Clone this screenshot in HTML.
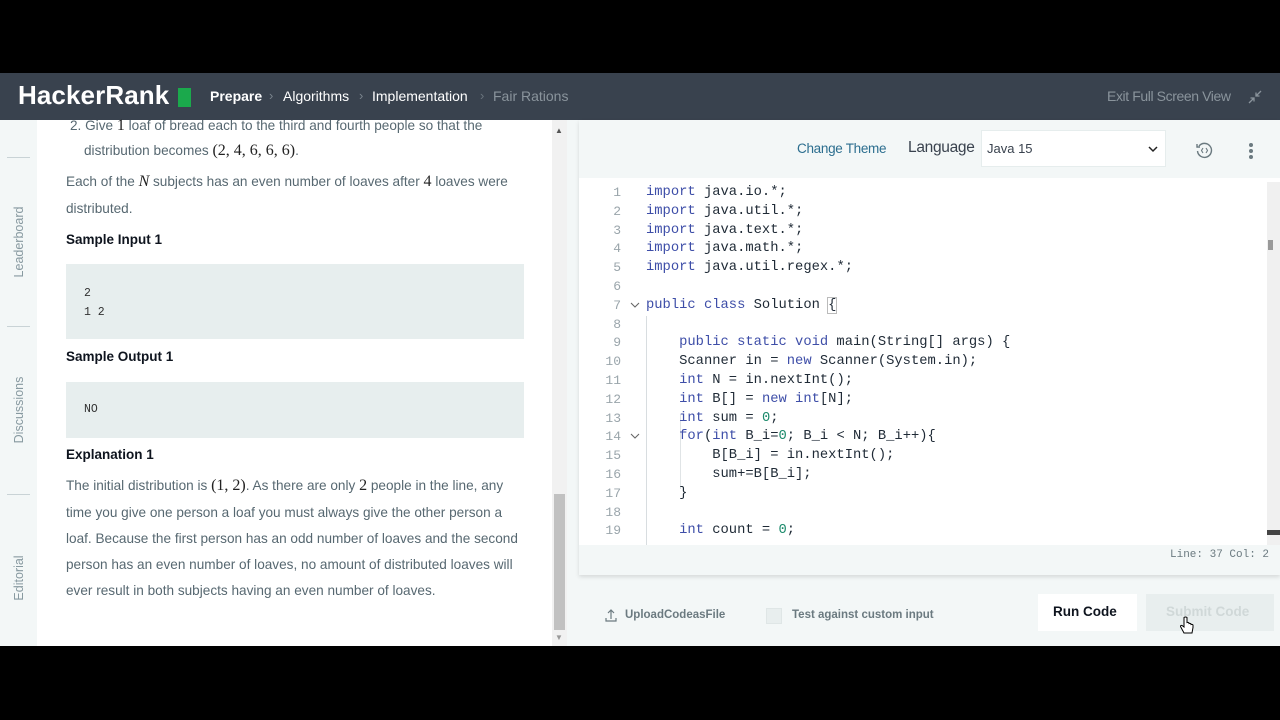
<!DOCTYPE html>
<html><head><meta charset="utf-8"><style>
*{margin:0;padding:0;box-sizing:border-box}
body{width:1280px;height:720px;background:#000;position:relative;overflow:hidden;font-family:"Liberation Sans",sans-serif}
.a{position:absolute;white-space:nowrap}
#hdr{position:absolute;left:0;top:73px;width:1280px;height:47px;background:#39424e}
#main{position:absolute;left:0;top:120px;width:1280px;height:526px;background:#f3f7f7}
.t{font-size:13.6px;color:#576871}
.m{font-family:"Liberation Serif",serif;font-size:16px;color:#222}
.h{font-size:13.5px;font-weight:bold;color:#0e141e}
.box{position:absolute;left:66px;width:458px;background:#e7eeee}
.code{font-family:"Liberation Mono",monospace;font-size:13.8px;color:#1f2a36}
.ln{position:absolute;left:600px;width:21px;text-align:right;font-family:"Liberation Mono",monospace;font-size:12.5px;color:#9aa5ab}
.k{color:#3e4ea8}.n{color:#1b8a6b}
.side{position:absolute;left:19px;transform:translate(-50%,-50%) rotate(-90deg);font-size:12.5px;color:#8799a0}
</style></head><body>
<div id="hdr">
 <div class="a" style="left:18px;top:7px;font-size:26px;font-weight:bold;color:#fff;letter-spacing:0.1px">HackerRank</div>
 <div class="a" style="left:178px;top:15px;width:13px;height:19px;background:#1ba94c"></div>
 <div class="a" style="left:210px;top:15px;font-size:14px;color:#fff;font-weight:bold">Prepare</div>
 <div class="a" style="left:269px;top:15px;font-size:13px;color:#7a848d">›</div>
 <div class="a" style="left:283px;top:15px;font-size:14px;color:#fff">Algorithms</div>
 <div class="a" style="left:359px;top:15px;font-size:13px;color:#7a848d">›</div>
 <div class="a" style="left:372px;top:15px;font-size:14px;color:#fff">Implementation</div>
 <div class="a" style="left:480px;top:15px;font-size:13px;color:#6a747d">›</div>
 <div class="a" style="left:493px;top:15px;font-size:14px;color:#8a949c">Fair Rations</div>
 <div class="a" style="left:1107px;top:15px;font-size:14px;color:#8a949c;letter-spacing:-0.4px">Exit Full Screen View</div>
 <svg class="a" style="left:1248px;top:17px" width="14" height="14" viewBox="0 0 14 14" stroke="#8a949c" stroke-width="1.3" fill="none"><path d="M1 13L6 8M2.5 8H6V11.5M13 1L8 6M8 2.5V6H11.5"/></svg>
</div>
<div id="main">
 <div class="a" style="left:7px;top:37px;width:23px;height:1px;background:#c9d3d6"></div>
 <div class="a" style="left:7px;top:206px;width:23px;height:1px;background:#c9d3d6"></div>
 <div class="a" style="left:7px;top:374px;width:23px;height:1px;background:#c9d3d6"></div>
 <div class="side" style="top:122px">Leaderboard</div>
 <div class="side" style="top:290px">Discussions</div>
 <div class="side" style="top:458px">Editorial</div>
 <div class="a" style="left:37px;top:0;width:515px;height:526px;background:#fff"></div>
 <div class="a" style="left:552px;top:0;width:15px;height:526px;background:#f1f1f1"></div>
 <div class="a" style="left:555px;top:6px;font-size:8px;color:#555">▲</div>
 <div class="a" style="left:555px;top:513px;font-size:8px;color:#999">▼</div>
 <div class="a" style="left:554px;top:374px;width:11px;height:136px;background:#c1c1c1"></div>
 <div class="a t" style="left:70px;top:-3px">2. Give <span class="m">1</span> loaf of bread each to the third and fourth people so that the</div>
 <div class="a t" style="left:84px;top:22px">distribution becomes <span class="m">(2, 4, 6, 6, 6)</span>.</div>
 <div class="a t" style="left:66px;top:53px">Each of the <span class="m"><i>N</i></span> subjects has an even number of loaves after <span class="m">4</span> loaves were</div>
 <div class="a t" style="left:66px;top:81px">distributed.</div>
 <div class="a h" style="left:66px;top:112px">Sample Input 1</div>
 <div class="box" style="top:144px;height:75px"></div>
 <div class="a code" style="left:84px;top:164px;font-size:11.5px;line-height:19px;color:#333">2<br>1 2</div>
 <div class="a h" style="left:66px;top:229px">Sample Output 1</div>
 <div class="box" style="top:262px;height:56px"></div>
 <div class="a code" style="left:84px;top:283px;font-size:11.5px;color:#333">NO</div>
 <div class="a h" style="left:66px;top:327px">Explanation 1</div>
 <div class="a t" style="left:66px;top:357px">The initial distribution is <span class="m">(1, 2)</span>. As there are only <span class="m">2</span> people in the line, any</div>
 <div class="a t" style="left:66px;top:385px">time you give one person a loaf you must always give the other person a</div>
 <div class="a t" style="left:66px;top:411px">loaf. Because the first person has an odd number of loaves and the second</div>
 <div class="a t" style="left:66px;top:437px">person has an even number of loaves, no amount of distributed loaves will</div>
 <div class="a t" style="left:66px;top:463px">ever result in both subjects having an even number of loaves.</div>

 <div class="a" style="left:579px;top:0;width:701px;height:455px;background:#f3f7f7;box-shadow:0 2px 4px rgba(0,0,0,.12)"></div>
 <div class="a" style="left:797px;top:21px;font-size:13.5px;color:#2c6e8f;letter-spacing:-0.3px">Change Theme</div>
 <div class="a" style="left:908px;top:19px;font-size:15.5px;color:#39424e;letter-spacing:-0.3px">Language</div>
 <div class="a" style="left:981px;top:10px;width:185px;height:37px;background:#fff;border:1px solid #e6eded"></div>
 <div class="a" style="left:987px;top:21px;font-size:13px;color:#39424e">Java 15</div>
 <svg class="a" style="left:1148px;top:26px" width="10" height="7" viewBox="0 0 10 7"><path d="M1 1L5 5L9 1" stroke="#222" stroke-width="1.5" fill="none"/></svg>
 <svg class="a" style="left:1195px;top:21px" width="19" height="19" viewBox="0 0 19 19" fill="none" stroke="#6b7a80" stroke-width="1.4"><path d="M4 5A7 7 0 1 1 2.5 10"/><path d="M2 3V6H5"/><path d="M8 7L6.5 9.5L8 12M11 7L12.5 9.5L11 12" stroke-width="1.1"/></svg>
 <div class="a" style="left:1249px;top:23px;width:4px;height:4px;border-radius:2px;background:#6b7a80;box-shadow:0 6px 0 #6b7a80,0 12px 0 #6b7a80"></div>
 <div class="a" style="left:579px;top:58px;width:701px;height:367px;background:#fff"></div>
 <div class="a" style="left:1267px;top:62px;width:13px;height:363px;background:#f0f0f0"></div>
 <div class="a" style="left:1268px;top:120px;width:5px;height:10px;background:#999"></div>
 <div class="a" style="left:1267px;top:410px;width:13px;height:5px;background:#444"></div>
 <div class="a" style="left:646px;top:196px;width:1px;height:229px;background:#d8dde0"></div>
 <div class="a" style="left:680px;top:294px;width:1px;height:75px;background:#e0e4e6"></div>
 <div class="a code" style="left:646px;top:64px;line-height:18.8px;white-space:pre"><span class="k">import</span> java.io.*;
<span class="k">import</span> java.util.*;
<span class="k">import</span> java.text.*;
<span class="k">import</span> java.math.*;
<span class="k">import</span> java.util.regex.*;

<span class="k">public class</span> Solution <span style="outline:1px solid #bbb">{</span>

    <span class="k">public static void</span> main(String[] args) {
    Scanner in = <span class="k">new</span> Scanner(System.in);
    <span class="k">int</span> N = in.nextInt();
    <span class="k">int</span> B[] = <span class="k">new int</span>[N];
    <span class="k">int</span> sum = <span class="n">0</span>;
    <span class="k">for</span>(<span class="k">int</span> B_i=<span class="n">0</span>; B_i &lt; N; B_i++){
        B[B_i] = in.nextInt();
        sum+=B[B_i];
    }

    <span class="k">int</span> count = <span class="n">0</span>;</div>
 <div class="ln" style="top:64px;line-height:18.8px;font-size:13px">1<br>2<br>3<br>4<br>5<br>6<br>7<br>8<br>9<br>10<br>11<br>12<br>13<br>14<br>15<br>16<br>17<br>18<br>19</div>
 <svg class="a" style="left:630px;top:182px" width="10" height="7" viewBox="0 0 10 7"><path d="M1 1L5 5L9 1" stroke="#666" stroke-width="1.1" fill="none"/></svg>
 <svg class="a" style="left:630px;top:313px" width="10" height="7" viewBox="0 0 10 7"><path d="M1 1L5 5L9 1" stroke="#666" stroke-width="1.1" fill="none"/></svg>
 <div class="a code" style="left:1170px;top:429px;font-size:11px;color:#6b7a80">Line: 37 Col: 2</div>
 <svg class="a" style="left:605px;top:489px" width="12" height="13" viewBox="0 0 12 13" fill="none" stroke="#6b7a80" stroke-width="1.2"><path d="M6 10V1M3 4L6 1L9 4M1 9V12H11V9"/></svg>
 <div class="a" style="left:625px;top:489px;font-size:11.5px;font-weight:bold;color:#6b7a80">UploadCodeasFile</div>
 <div class="a" style="left:766px;top:488px;width:16px;height:16px;background:#e8eeee;border:1px solid #dfe6e6"></div>
 <div class="a" style="left:792px;top:489px;font-size:11.5px;font-weight:bold;color:#6b7a80">Test against custom input</div>
 <div class="a" style="left:1038px;top:474px;width:99px;height:37px;background:#fff"></div>
 <div class="a" style="left:1053px;top:484px;font-size:13.5px;font-weight:bold;color:#0e141e">Run Code</div>
 <div class="a" style="left:1146px;top:474px;width:128px;height:37px;background:#e8eeee"></div>
 <div class="a" style="left:1166px;top:484px;font-size:13.5px;font-weight:bold;color:#d0d8d8">Submit Code</div>
 <svg class="a" style="left:1179px;top:496px" width="16" height="20" viewBox="0 0 16 20"><path d="M5 1.5V11L3 9.5Q1.5 9 1.5 10.5L5 17H13L14 11.5V9Q13.5 8 12 8.5V8Q11.5 7 10 7.5V7Q9.5 6 8 6.5V1.5Q6.5 0.5 5 1.5Z" fill="#fff" stroke="#000" stroke-width="1"/></svg>
</div>
</body></html>
